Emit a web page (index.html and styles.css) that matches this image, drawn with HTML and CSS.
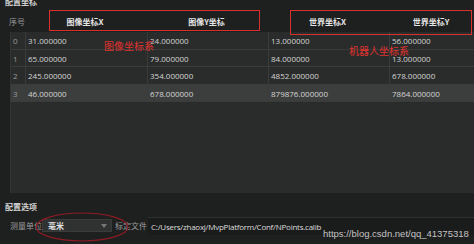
FILE: index.html
```html
<!DOCTYPE html>
<html>
<head>
<meta charset="utf-8">
<link rel="stylesheet" href="styles.css">
</head>
<body>
<div class="title">配置坐标</div>
<div class="table">
  <div class="thead">
    <div class="th idx">序号</div>
    <div class="th">图像坐标X</div>
    <div class="th">图像Y坐标</div>
    <div class="th">世界坐标X</div>
    <div class="th">世界坐标Y</div>
  </div>
  <div class="tbody">
    <div class="tr h18"><div class="td idx">0</div><div class="td">31.000000</div><div class="td">24.000000</div><div class="td">13.000000</div><div class="td">56.000000</div></div>
    <div class="tr h17"><div class="td idx">1</div><div class="td">65.000000</div><div class="td">79.000000</div><div class="td">84.000000</div><div class="td">13.000000</div></div>
    <div class="tr h18"><div class="td idx">2</div><div class="td">245.000000</div><div class="td">354.000000</div><div class="td">4852.000000</div><div class="td">678.000000</div></div>
    <div class="tr h17 sel"><div class="td idx">3</div><div class="td">46.000000</div><div class="td">678.000000</div><div class="td">879876.000000</div><div class="td">7864.000000</div></div>
  </div>
</div>
<div class="section">配置选项</div>
<div class="opts">
  <span class="lbl">测量单位</span>
  <div class="combo"><span>毫米</span><svg class="arrow" width="6" height="4" viewBox="0 0 6 4"><path d="M0 0H6L3 4Z" fill="#777"/></svg></div>
  <span class="lbl lbl2">标定文件</span>
  <div class="path">C:/Users/zhaoxj/MvpPlatform/Conf/NPoints.calib</div>
</div>

<div class="box box1"></div>
<div class="box box2"></div>
<div class="note note1">图像坐标系</div>
<div class="note note2">机器人坐标系</div>
<svg class="ellipse" width="474" height="244" viewBox="0 0 474 244"><ellipse cx="82" cy="227" rx="46" ry="14" fill="none" stroke="#8e1c24" stroke-width="1.2"/></svg>
<div class="mark">https://blog.csdn.net/qq_41375318</div>
</body>
</html>
```

FILE: styles.css
```css
html, body {
  margin: 0;
  padding: 0;
}
body {
  width: 474px;
  height: 244px;
  overflow: hidden;
  background: #1e1f1f;
  font-family: "Open Sans", "Noto Sans CJK SC", sans-serif;
  font-size: 8px;
  color: #d2d2d2;
  position: relative;
}
.title {
  margin-top: -2px;
  height: 7px;
  line-height: 7px;
  padding-left: 5px;
  color: #cfcfcf;
  font-weight: 700;
  font-family: "Noto Sans CJK SC", sans-serif;
}
.table {
  margin-top: 6px;
  margin-left: 9px;
}
.thead {
  display: grid;
  grid-template-columns: 15px 122px 121px 121px 1fr;
  height: 21px;
  align-items: center;
}
.th {
  text-align: center;
  color: #e6e6e6;
  font-weight: 700;
  white-space: nowrap;
  font-family: "Noto Sans CJK SC", sans-serif;
}
.th.idx {
  text-align: left;
  font-weight: 400;
  color: #9a9a9a;
}
.tbody {
  height: 161px;
  background: #2a2c2b;
  border-left: 1px solid #333534;
  margin-left: 1px;
}
.tr {
  display: grid;
  grid-template-columns: 14px 122px 121px 121px 1fr;
  border-bottom: 1px solid #3a3c3b;
  box-sizing: border-box;
}
.h18 { height: 18px; }
.h17 { height: 17px; }
.tr.sel { background: #3c3e3d; }
.td {
  display: flex;
  align-items: center;
  padding-left: 2px;
  border-left: 1px solid #3a3c3b;
  color: #d4d4d4;
  white-space: nowrap;
}
.td.idx {
  border-left: none;
  padding-left: 2px;
  color: #9a9a9a;
}
.section {
  margin-top: 8px;
  padding-left: 5px;
  height: 12px;
  line-height: 12px;
  color: #d0d0d0;
  font-weight: 700;
  font-family: "Noto Sans CJK SC", sans-serif;
}
.opts {
  margin-top: 6px;
  height: 13px;
  display: flex;
  align-items: center;
  padding-left: 10px;
}
.lbl {
  color: #9c9c9c;
  width: 32px;
  flex: none;
  white-space: nowrap;
  font-family: "Noto Sans CJK SC", sans-serif;
}
.lbl2 {
  width: 33px;
}
.combo {
  width: 70px;
  flex: none;
  height: 13px;
  box-sizing: border-box;
  background: #303231;
  border: 1px solid #3a3c3b;
  display: flex;
  align-items: center;
  justify-content: space-between;
  padding: 0 4px 0 5px;
  margin-right: 3px;
  color: #e0e0e0;
  font-weight: 700;
}
.path {
  flex: 1;
  height: 18px;
  box-sizing: border-box;
  background: #1a1b1b;
  border-top: 1px solid #2e3030;
  display: flex;
  align-items: center;
  padding-left: 3px;
  color: #dcdcdc;
  white-space: nowrap;
  letter-spacing: -0.25px;
}
.box {
  position: absolute;
  border: 1.5px solid #d8302d;
  box-sizing: border-box;
}
.box1 { left: 49px; top: 10px; width: 211px; height: 21px; }
.box2 { left: 290px; top: 10px; width: 182px; height: 25px; }
.note {
  position: absolute;
  color: #e03330;
  font-size: 10px;
  line-height: 10px;
  font-family: "Noto Sans CJK SC", sans-serif;
}
.note1 { left: 104px; top: 41px; }
.note2 { left: 349px; top: 46px; }
.ellipse {
  position: absolute;
  left: 0;
  top: 0;
}
.mark {
  position: absolute;
  left: 323px;
  top: 228px;
  font-family: "Liberation Sans", sans-serif;
  font-size: 9.5px;
  color: #c4c4c4;
}
```
